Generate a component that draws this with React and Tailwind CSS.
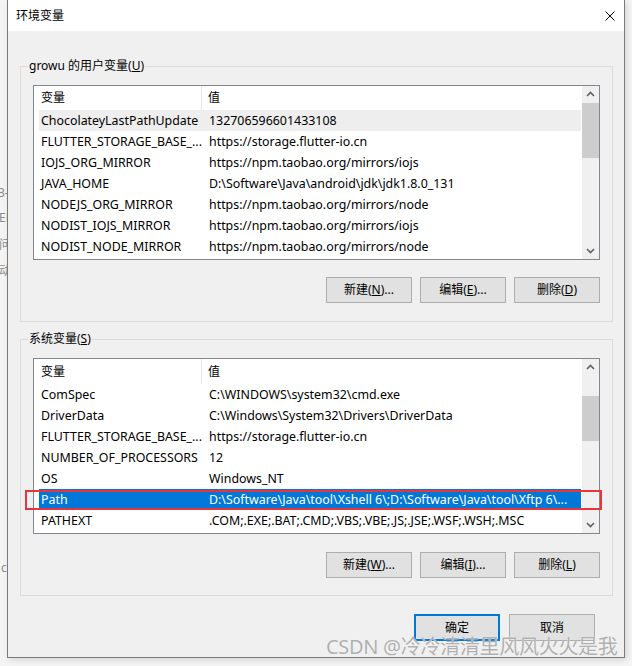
import React from "react";

const font = { fontFamily: '"Noto Sans", "Noto Sans CJK SC", sans-serif' };

const userVars = [
  ["ChocolateyLastPathUpdate", "132706596601433108"],
  ["FLUTTER_STORAGE_BASE_...", "https://storage.flutter-io.cn"],
  ["IOJS_ORG_MIRROR", "https://npm.taobao.org/mirrors/iojs"],
  ["JAVA_HOME", "D:\\Software\\Java\\android\\jdk\\jdk1.8.0_131"],
  ["NODEJS_ORG_MIRROR", "https://npm.taobao.org/mirrors/node"],
  ["NODIST_IOJS_MIRROR", "https://npm.taobao.org/mirrors/iojs"],
  ["NODIST_NODE_MIRROR", "https://npm.taobao.org/mirrors/node"],
];

const sysVars = [
  ["ComSpec", "C:\\WINDOWS\\system32\\cmd.exe"],
  ["DriverData", "C:\\Windows\\System32\\Drivers\\DriverData"],
  ["FLUTTER_STORAGE_BASE_...", "https://storage.flutter-io.cn"],
  ["NUMBER_OF_PROCESSORS", "12"],
  ["OS", "Windows_NT"],
  ["Path", "D:\\Software\\Java\\tool\\Xshell 6\\;D:\\Software\\Java\\tool\\Xftp 6\\..."],
  ["PATHEXT", ".COM;.EXE;.BAT;.CMD;.VBS;.VBE;.JS;.JSE;.WSF;.WSH;.MSC"],
];

const Chevron = ({ down }) => (
  <svg width="17" height="17" viewBox="0 0 17 17">
    <path
      d={down ? "M5 7 L8.5 10.5 L12 7" : "M5 10 L8.5 6.5 L12 10"}
      fill="none"
      stroke="#606060"
      strokeWidth="1.6"
    />
  </svg>
);

const ScrollBar = ({ offset, thumb }) => (
  <div className="w-[17px] h-full bg-[#f0f0f0] flex flex-col">
    <Chevron />
    <div style={{ height: offset }} />
    <div className="bg-[#cdcdcd]" style={{ height: thumb }} />
    <div className="flex-1" />
    <Chevron down />
  </div>
);

const VarList = ({ rows, header, offset, thumb, hover, selected, height }) => (
  <div
    className="border border-[#828790] bg-white flex overflow-hidden"
    style={{ height }}
  >
    <div className="flex-1 pl-[5px] pr-[1px]">
      <div className="flex items-center" style={{ height: header }}>
        <div className="w-[163px] h-full flex items-center pl-[2px] border-r border-[#e5e5e5]">
          变量
        </div>
        <div className="pl-[6px]">值</div>
      </div>
      {rows.map(([name, value], i) => (
        <div
          key={name + i}
          className={
            "h-[21px] pt-[1px] flex items-center whitespace-nowrap text-[12.4px] " +
            (i === selected
              ? "bg-[#0078d7] text-white"
              : i === hover
              ? "bg-[#eeeeee]"
              : "")
          }
        >
          <div className="w-[163px] pl-[2px] overflow-hidden">{name}</div>
          <div className="pl-[7px] overflow-hidden">{value}</div>
        </div>
      ))}
    </div>
    <ScrollBar offset={offset} thumb={thumb} />
  </div>
);

const WinButton = ({ children, primary, h = "h-[26px]" }) => (
  <div
    className={
      "w-[86px] flex items-center justify-center bg-[#e1e1e1] " +
      h +
      " " +
      (primary ? "border-2 border-[#0078d7]" : "border border-[#adadad]")
    }
  >
    {children}
  </div>
);

const Group = ({ label, children, className }) => (
  <div
    className={
      "relative ml-[12px] w-[593px] border border-[#dcdcdc] pt-[18px] px-[12px] " +
      className
    }
  >
    <span className="absolute left-[7px] -top-[10px] bg-[#f0f0f0] px-[1px] leading-[18px]">
      {label}
    </span>
    {children}
  </div>
);

export default function App() {
  return (
    <div
      className="relative w-[632px] h-[666px] bg-[#f4f4f4] flex text-[12px] text-black overflow-hidden"
      style={font}
    >
      <div className="w-[7px] overflow-hidden text-[#8a8a8a] whitespace-nowrap leading-[16px]">
        <div className="mt-[185px] -ml-[2px]">3-</div>
        <div className="mt-[9px] -ml-[1px]">EN</div>
        <div className="mt-[11px] -ml-[1px]">问</div>
        <div className="mt-[10px] -ml-[1px]">动</div>
        <div className="mt-[281px] ml-[1px]">c</div>
      </div>

      <div className="w-[618px] h-[658px] border border-t-0 border-[#7a7a7a] bg-[#f0f0f0] flex flex-col shadow-[2px_2px_6px_rgba(0,0,0,0.12)]">
        <div className="h-[31px] bg-white flex items-center justify-between pl-[8px] pr-[9px]">
          <span>环境变量</span>
          <svg width="10" height="10" viewBox="0 0 10 10">
            <path d="M0.5 0.5 L9.5 9.5 M9.5 0.5 L0.5 9.5" stroke="#000" strokeWidth="1" />
          </svg>
        </div>

        <Group label={<>growu 的用户变量(<u>U</u>)</>} className="mt-[35px] pb-[18px]">
          <VarList rows={userVars} header={24} offset={0} thumb={55} hover={0} height={175} />
          <div className="flex justify-end gap-[8px] mt-[17px]">
            <WinButton>新建(<u>N</u>)...</WinButton>
            <WinButton>编辑(<u>E</u>)...</WinButton>
            <WinButton>删除(<u>D</u>)</WinButton>
          </div>
        </Group>

        <Group label={<>系统变量(<u>S</u>)</>} className="mt-[17px] pb-[17px]">
          <VarList rows={sysVars} header={25} offset={20} thumb={45} selected={5} height={176} />
          <div className="flex justify-end gap-[8px] mt-[18px]">
            <WinButton>新建(<u>W</u>)...</WinButton>
            <WinButton>编辑(<u>I</u>)...</WinButton>
            <WinButton>删除(<u>L</u>)</WinButton>
          </div>
        </Group>

        <div className="flex justify-end gap-[9px] mt-[18px] pr-[29px]">
          <WinButton primary h="h-[27px]">确定</WinButton>
          <WinButton h="h-[27px]">取消</WinButton>
        </div>
      </div>

      <div className="absolute left-[25px] top-[490px] w-[577px] h-[20px] border-2 border-[#e8343a]" />

      <div className="absolute left-[326px] top-[633px] text-[20px] leading-[28px] text-[#b0b0b0] whitespace-nowrap tracking-[-0.3px] [text-shadow:0_0_1px_#ffffff]">
        CSDN @冷冷清清里风风火火是我
      </div>
    </div>
  );
}
